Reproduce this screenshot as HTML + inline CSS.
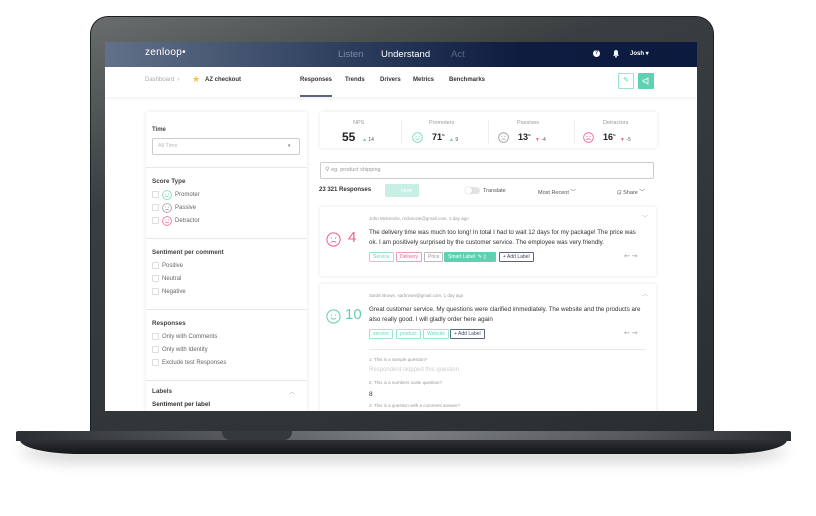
<!DOCTYPE html>
<html><head><meta charset="utf-8"><style>
*{box-sizing:border-box;margin:0;padding:0}
body{width:816px;height:516px;background:#fff;position:relative;overflow:hidden;font-family:"Liberation Sans",sans-serif;color:#333}
.a{position:absolute}
.lid{left:90px;top:16px;width:624px;height:422px;border-radius:18px 18px 0 0;background:linear-gradient(160deg,#6a6d6d 0%,#3a3e40 30%,#2a2e31 100%);border:1.5px solid #1c1f21}
.screen{left:105px;top:42px;width:592px;height:369px;background:#fff;overflow:hidden}
.nav{left:0;top:0;width:592px;height:25px;background:linear-gradient(90deg,#617189 0%,#2e3f5e 40%,#0e1c40 70%,#0b1a3e 100%)}
.sub{left:0;top:25px;width:592px;height:30px;background:#fff;box-shadow:0 2px 4px rgba(0,0,0,.06)}
.t{position:absolute;white-space:nowrap}
.card{position:absolute;background:#fff;box-shadow:0 0 4px rgba(0,0,0,.1);border-radius:2px}
.cb{position:absolute;width:7px;height:7px;border:1px solid #ddd;border-radius:1px}
.lab{position:absolute;height:10px;border:1px solid;border-radius:1px;font-size:5px;line-height:8px;padding:0 3px;white-space:nowrap}
.hr{position:absolute;height:1px;background:#e8e8e8}
svg.f{position:absolute}
</style></head><body>
<div class="a lid"></div>
<div class="a" style="left:16px;top:431px;width:775px;height:10px;background:linear-gradient(90deg,#2c2f32,#4b4e52 20%,#7c7f84 50%,#55585c 80%,#2c2f32);border-radius:2px 2px 0 0"></div>
<div class="a" style="left:20px;top:440px;width:767px;height:14px;background:linear-gradient(#2e3135,#141618);border-radius:0 0 60px 60px/0 0 14px 14px;box-shadow:0 8px 14px rgba(0,0,0,.18)"></div>
<div class="a" style="left:222px;top:431px;width:70px;height:9px;background:#35383c;border-radius:0 0 8px 8px"></div>
<div class="a screen">
 <div class="a nav">
  <div class="t" style="left:40px;top:5px;color:#fff;font-size:10px;letter-spacing:.3px">zenloop•</div>
  <div class="t" style="left:233px;top:7px;color:#7d8aa6;font-size:9.5px">Listen</div>
  <div class="t" style="left:276px;top:7px;color:#fff;font-size:9.5px">Understand</div>
  <div class="t" style="left:346px;top:7px;color:#5d6a86;font-size:9.5px">Act</div>
  <div class="t" style="left:488px;top:8px;width:7px;height:7px;border-radius:50%;background:#fff;color:#0b1a3e;font-size:5px;text-align:center;line-height:7px;font-weight:bold">?</div>
  <svg class="f" style="left:507px;top:7px" width="8" height="9" viewBox="0 0 8 9"><path d="M4 1C2.5 1 2 2.3 2 3.5V5.5L1 6.8H7L6 5.5V3.5C6 2.3 5.5 1 4 1Z" fill="#fff"/><circle cx="4" cy="7.8" r=".9" fill="#fff"/></svg>
  <div class="t" style="left:525px;top:8px;color:#fff;font-size:6px;font-weight:bold">Josh ▾</div>
 </div>
 <div class="a sub">
  <div class="t" style="left:40px;top:10px;color:#aaa;font-size:6px">Dashboard &nbsp;›</div>
  <div class="t" style="left:87px;top:7px;color:#f5c542;font-size:9px">★</div>
  <div class="t" style="left:100px;top:10px;color:#333;font-size:6px;font-weight:bold">AZ checkout</div>
  <div class="t" style="left:195px;top:10px;color:#333;font-size:6px;font-weight:bold">Responses</div>
  <div class="a" style="left:195px;top:28px;width:32px;height:2px;background:#5a6680"></div>
  <div class="t" style="left:240px;top:10px;color:#333;font-size:6px;font-weight:bold">Trends</div>
  <div class="t" style="left:275px;top:10px;color:#333;font-size:6px;font-weight:bold">Drivers</div>
  <div class="t" style="left:308px;top:10px;color:#333;font-size:6px;font-weight:bold">Metrics</div>
  <div class="t" style="left:344px;top:10px;color:#333;font-size:6px;font-weight:bold">Benchmarks</div>
  <div class="a" style="left:513px;top:6px;width:16px;height:16px;border:1px solid #9ee3cf;border-radius:1px;color:#5fd2b2;font-size:7px;text-align:center;line-height:14px">✎</div>
  <div class="a" style="left:533px;top:6px;width:16px;height:16px;background:#5fd0b2;border-radius:1px"></div>
  <svg class="f" style="left:537px;top:10px" width="8" height="8" viewBox="0 0 8 8"><path d="M1 3H3L6 1V7L3 5H1Z" fill="none" stroke="#fff" stroke-width=".8"/></svg>
 </div>
 <!-- sidebar -->
 <div class="card" style="left:41px;top:70px;width:161px;height:310px">
  <div class="t" style="left:6px;top:15px;font-size:6px;font-weight:bold;color:#444">Time</div>
  <div class="a" style="left:6px;top:26px;width:148px;height:17px;border:1px solid #ccc;border-radius:2px"></div>
  <div class="t" style="left:12px;top:31px;font-size:5.5px;color:#bbb">All Time</div>
  <div class="t" style="left:142px;top:31px;font-size:5px;color:#777">▾</div>
  <div class="hr" style="left:0;top:55px;width:161px"></div>
  <div class="t" style="left:6px;top:66px;font-size:6.3px;font-weight:bold;color:#444">Score Type</div>
  <div class="cb" style="left:6px;top:79px"></div>
  <svg class="f" style="left:16px;top:78px" width="10" height="10" viewBox="0 0 10 10"><circle cx="5" cy="5" r="4.4" fill="none" stroke="#6fd6bb" stroke-width=".8"/><circle cx="3.6" cy="4" r=".5" fill="#6fd6bb"/><circle cx="6.4" cy="4" r=".5" fill="#6fd6bb"/><path d="M3.2 6Q5 7.6 6.8 6" fill="none" stroke="#6fd6bb" stroke-width=".7"/></svg>
  <div class="t" style="left:29px;top:80px;font-size:6px;color:#666">Promoter</div>
  <div class="cb" style="left:6px;top:92px"></div>
  <svg class="f" style="left:16px;top:91px" width="10" height="10" viewBox="0 0 10 10"><circle cx="5" cy="5" r="4.4" fill="none" stroke="#999" stroke-width=".8"/><circle cx="3.6" cy="4" r=".5" fill="#999"/><circle cx="6.4" cy="4" r=".5" fill="#999"/><path d="M3.3 6.4H6.7" stroke="#999" stroke-width=".7"/></svg>
  <div class="t" style="left:29px;top:93px;font-size:6px;color:#666">Passive</div>
  <div class="cb" style="left:6px;top:105px"></div>
  <svg class="f" style="left:16px;top:104px" width="10" height="10" viewBox="0 0 10 10"><circle cx="5" cy="5" r="4.4" fill="none" stroke="#f0608e" stroke-width=".8"/><circle cx="3.6" cy="4" r=".5" fill="#f0608e"/><circle cx="6.4" cy="4" r=".5" fill="#f0608e"/><path d="M3.2 7Q5 5.4 6.8 7" fill="none" stroke="#f0608e" stroke-width=".7"/></svg>
  <div class="t" style="left:29px;top:106px;font-size:6px;color:#666">Detractor</div>
  <div class="hr" style="left:0;top:126px;width:161px"></div>
  <div class="t" style="left:6px;top:137px;font-size:6.3px;font-weight:bold;color:#444">Sentiment per comment</div>
  <div class="cb" style="left:6px;top:150px"></div><div class="t" style="left:16px;top:151px;font-size:6px;color:#666">Positive</div>
  <div class="cb" style="left:6px;top:163px"></div><div class="t" style="left:16px;top:164px;font-size:6px;color:#666">Neutral</div>
  <div class="cb" style="left:6px;top:176px"></div><div class="t" style="left:16px;top:177px;font-size:6px;color:#666">Negative</div>
  <div class="hr" style="left:0;top:197px;width:161px"></div>
  <div class="t" style="left:6px;top:208px;font-size:6.3px;font-weight:bold;color:#444">Responses</div>
  <div class="cb" style="left:6px;top:221px"></div><div class="t" style="left:16px;top:222px;font-size:6px;color:#666">Only with Comments</div>
  <div class="cb" style="left:6px;top:234px"></div><div class="t" style="left:16px;top:235px;font-size:6px;color:#666">Only with Identity</div>
  <div class="cb" style="left:6px;top:247px"></div><div class="t" style="left:16px;top:248px;font-size:6px;color:#666">Exclude test Responses</div>
  <div class="hr" style="left:0;top:268px;width:161px"></div>
  <div class="t" style="left:6px;top:276px;font-size:6.3px;font-weight:bold;color:#444">Labels</div>
  <div class="t" style="left:143px;top:275px;font-size:6px;color:#aaa">︿</div>
  <div class="t" style="left:6px;top:289px;font-size:6.3px;font-weight:bold;color:#333">Sentiment per label</div>
 </div>
 <!-- stats -->
 <div class="card" style="left:215px;top:70px;width:337px;height:36px">
  <div class="t" style="left:33px;top:8px;font-size:5.5px;color:#999">NPS</div>
  <div class="t" style="left:22px;top:18px;font-size:12px;font-weight:bold;color:#222">55</div>
  <div class="t" style="left:42px;top:25px;font-size:5px;color:#555"><span style="color:#5fd0b2">▲</span> 14</div>
  <div class="a" style="left:81px;top:8px;width:1px;height:24px;background:#eee"></div>
  <div class="t" style="left:109px;top:8px;font-size:5.5px;color:#999">Promoters</div>
  <svg class="f" style="left:92px;top:20px" width="11" height="11" viewBox="0 0 10 10"><circle cx="5" cy="5" r="4.4" fill="none" stroke="#6fd6bb" stroke-width=".8"/><circle cx="3.6" cy="4" r=".5" fill="#6fd6bb"/><circle cx="6.4" cy="4" r=".5" fill="#6fd6bb"/><path d="M3.2 6Q5 7.6 6.8 6" fill="none" stroke="#6fd6bb" stroke-width=".7"/></svg>
  <div class="t" style="left:112px;top:20px;font-size:9px;font-weight:bold;color:#222">71<sup style="font-size:3px">%</sup></div>
  <div class="t" style="left:129px;top:25px;font-size:5px;color:#555"><span style="color:#5fd0b2">▲</span> 9</div>
  <div class="a" style="left:168px;top:8px;width:1px;height:24px;background:#eee"></div>
  <div class="t" style="left:197px;top:8px;font-size:5.5px;color:#999">Passives</div>
  <svg class="f" style="left:178px;top:20px" width="11" height="11" viewBox="0 0 10 10"><circle cx="5" cy="5" r="4.4" fill="none" stroke="#999" stroke-width=".8"/><circle cx="3.6" cy="4" r=".5" fill="#999"/><circle cx="6.4" cy="4" r=".5" fill="#999"/><path d="M3.3 6.4H6.7" stroke="#999" stroke-width=".7"/></svg>
  <div class="t" style="left:198px;top:20px;font-size:9px;font-weight:bold;color:#222">13<sup style="font-size:3px">%</sup></div>
  <div class="t" style="left:215px;top:25px;font-size:5px;color:#555"><span style="color:#f0608e">▼</span> -4</div>
  <div class="a" style="left:254px;top:8px;width:1px;height:24px;background:#eee"></div>
  <div class="t" style="left:283px;top:8px;font-size:5.5px;color:#999">Detractors</div>
  <svg class="f" style="left:263px;top:20px" width="11" height="11" viewBox="0 0 10 10"><circle cx="5" cy="5" r="4.4" fill="none" stroke="#f0608e" stroke-width=".8"/><circle cx="3.6" cy="4" r=".5" fill="#f0608e"/><circle cx="6.4" cy="4" r=".5" fill="#f0608e"/><path d="M3.2 7Q5 5.4 6.8 7" fill="none" stroke="#f0608e" stroke-width=".7"/></svg>
  <div class="t" style="left:283px;top:20px;font-size:9px;font-weight:bold;color:#222">16<sup style="font-size:3px">%</sup></div>
  <div class="t" style="left:300px;top:25px;font-size:5px;color:#555"><span style="color:#f0608e">▼</span> -5</div>
 </div>
 <div class="a" style="left:215px;top:120px;width:334px;height:17px;border:1px solid #ccc;border-radius:2px"></div>
 <div class="t" style="left:220px;top:124px;font-size:6px;color:#999">⚲ <span style="font-size:5.5px">eg. product shipping</span></div>
 <div class="t" style="left:214px;top:145px;font-size:6px;font-weight:bold;color:#333">23 321 Responses</div>
 <div class="a" style="left:280px;top:142px;width:34px;height:13px;background:#c8efe3;border-radius:1px"></div>
 <div class="t" style="left:296px;top:146px;font-size:5.5px;color:#fff">New</div>
 <div class="a" style="left:360px;top:145px;width:15px;height:7px;border-radius:4px;background:#e3e3e3"></div>
 <div class="a" style="left:360px;top:145px;width:7px;height:7px;border-radius:50%;background:#fff;box-shadow:0 0 1px #999"></div>
 <div class="t" style="left:378px;top:146px;font-size:5.5px;color:#555">Translate</div>
 <div class="t" style="left:433px;top:146px;font-size:5.5px;color:#555">Most Recent ﹀</div>
 <div class="t" style="left:512px;top:146px;font-size:5.5px;color:#555">⊡ Share ﹀</div>
 <!-- card 1 -->
 <div class="card" style="left:215px;top:165px;width:336px;height:69px">
  <div class="t" style="left:49px;top:9px;font-size:4.5px;color:#999">John McKenzie, mckenzie@gmail.com, 1 day ago</div>
  <div class="t" style="left:322px;top:6px;font-size:6px;color:#bbb">﹀</div>
  <svg class="f" style="left:6px;top:25px" width="15" height="15" viewBox="0 0 10 10"><circle cx="5" cy="5" r="4.4" fill="none" stroke="#f0608e" stroke-width=".7"/><circle cx="3.6" cy="4" r=".45" fill="#f0608e"/><circle cx="6.4" cy="4" r=".45" fill="#f0608e"/><path d="M3.2 7Q5 5.4 6.8 7" fill="none" stroke="#f0608e" stroke-width=".6"/></svg>
  <div class="t" style="left:28px;top:22px;font-size:15px;color:#f0608e">4</div>
  <div class="t" style="left:49px;top:21px;font-size:6.2px;color:#333;line-height:10px">The delivery time was much too long! In total I had to wait 12 days for my package! The price was<br>ok. I am positively surprised by the customer service. The employee was very friendly.</div>
  <div class="lab" style="left:49px;top:45px;color:#6fd6bb;border-color:#9ee3cf">Service</div>
  <div class="lab" style="left:76px;top:45px;color:#f0608e;border-color:#f59bb8">Delivery</div>
  <div class="lab" style="left:104px;top:45px;color:#999;border-color:#bbb">Price</div>
  <div class="lab" style="left:124px;top:45px;color:#fff;background:#5fd0b2;border-color:#5fd0b2;width:52px">Smart Label &nbsp;✎ ▯</div>
  <div class="lab" style="left:179px;top:45px;color:#3e4a66;border-color:#5a6680">+ Add Label</div>
  <div class="t" style="left:304px;top:45px;font-size:7px;color:#aaa">⇜ ⇝</div>
 </div>
 <!-- card 2 -->
 <div class="card" style="left:215px;top:242px;width:336px;height:140px">
  <div class="t" style="left:49px;top:9px;font-size:4.5px;color:#999">Sarah Brown, sarbrown@gmail.com, 1 day ago</div>
  <div class="t" style="left:322px;top:5px;font-size:6px;color:#bbb">︿</div>
  <svg class="f" style="left:6px;top:25px" width="15" height="15" viewBox="0 0 10 10"><circle cx="5" cy="5" r="4.4" fill="none" stroke="#5fd0b2" stroke-width=".7"/><circle cx="3.6" cy="4" r=".45" fill="#5fd0b2"/><circle cx="6.4" cy="4" r=".45" fill="#5fd0b2"/><path d="M3.2 6Q5 7.6 6.8 6" fill="none" stroke="#5fd0b2" stroke-width=".6"/></svg>
  <div class="t" style="left:25px;top:22px;font-size:15px;color:#5fd0b2">10</div>
  <div class="t" style="left:49px;top:21px;font-size:6.2px;color:#333;line-height:10px">Great customer service. My questions were clarified immediately. The website and the products are<br>also really good. I will gladly order here again</div>
  <div class="lab" style="left:49px;top:45px;color:#6fd6bb;border-color:#9ee3cf">service</div>
  <div class="lab" style="left:76px;top:45px;color:#6fd6bb;border-color:#9ee3cf">product</div>
  <div class="lab" style="left:103px;top:45px;color:#6fd6bb;border-color:#9ee3cf">Website</div>
  <div class="lab" style="left:130px;top:45px;color:#3e4a66;border-color:#5a6680">+ Add Label</div>
  <div class="t" style="left:304px;top:45px;font-size:7px;color:#aaa">⇜ ⇝</div>
  <div class="hr" style="left:49px;top:65px;width:276px"></div>
  <div class="t" style="left:49px;top:73px;font-size:4.5px;color:#999">1. This is a sample question?</div>
  <div class="t" style="left:49px;top:83px;font-size:6px;color:#ccc">Respondent skipped this question</div>
  <div class="t" style="left:49px;top:96px;font-size:4.5px;color:#999">2. This is a numbers scale question?</div>
  <div class="t" style="left:49px;top:107px;font-size:6.5px;color:#333">8</div>
  <div class="t" style="left:49px;top:119px;font-size:4.5px;color:#999">3. This is a question with a comment answer?</div>
 </div>
</div>
</body></html>
